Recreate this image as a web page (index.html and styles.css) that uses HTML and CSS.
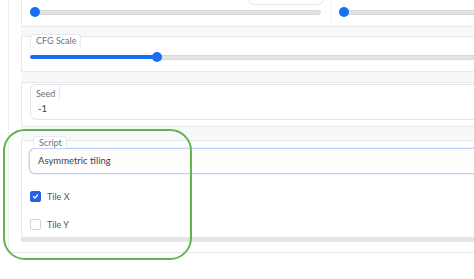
FILE: index.html
```html
<!DOCTYPE html>
<html>
<head>
<meta charset="utf-8">
<link rel="stylesheet" href="styles.css">
</head>
<body>
<div class="outer">
  <div class="col">
    <div class="panel top-panel">
      <div class="tcol tcol-left">
        <div class="numbox"></div>
        <div class="slider s-first">
          <div class="fill" style="width:5px"></div>
          <div class="thumb"></div>
          <div class="rest"></div>
        </div>
      </div>
      <div class="tcol tcol-right">
        <div class="slider s-second">
          <div class="fill" style="width:0px"></div>
          <div class="thumb"></div>
          <div class="rest rest-open"></div>
        </div>
      </div>
    </div>

    <div class="panel cfg-panel">
      <span class="chip chip-cfg">CFG Scale</span>
      <div class="slider s-cfg">
        <div class="fill" style="width:127px"></div>
        <div class="thumb"></div>
        <div class="rest rest-open"></div>
      </div>
    </div>

    <div class="panel seed-panel">
      <div class="seed-box">
        <span class="chip chip-seed">Seed</span>
        <div class="seed-value">-1</div>
      </div>
    </div>

    <div class="panel script-panel">
      <span class="chip chip-script">Script</span>
      <div class="dropdown">Asymmetric tiling</div>
      <label class="check-row row-x">
        <span class="box checked">
          <svg viewBox="0 0 12 12" width="11" height="11"><path d="M3.2 6.2 L5.1 8 L8.8 4" fill="none" stroke="#fff" stroke-width="1.6" stroke-linecap="round" stroke-linejoin="round"/></svg>
        </span>
        <span class="check-text">Tile X</span>
      </label>
      <label class="check-row row-y">
        <span class="box"></span>
        <span class="check-text">Tile Y</span>
      </label>
    </div>
  </div>
</div>
<div class="ring"></div>
</body>
</html>
```

FILE: styles.css
```css
html, body {
  margin: 0;
  padding: 0;
  background: #ffffff;
  overflow: hidden;
  width: 474px;
  height: 279px;
}

body {
  font-family: Lato, "Open Sans", "Liberation Sans", sans-serif;
  color: #374151;
  position: relative;
}

.outer {
  margin-left: 8px;
  margin-top: -20px;
  border-left: 1px solid #eceef1;
  border-bottom: 1px solid #e6e8eb;
  padding: 0 0 10px 12px;
}

.col {
  background: #f7f8fa;
  display: flex;
  flex-direction: column;
}

.panel {
  background: #ffffff;
  border: 1px solid #e7e9ec;
  border-right: none;
  display: flex;
  flex-direction: column;
  align-items: flex-start;
  font-size: 0;
}

/* top panel */
.top-panel {
  height: 46px;
  flex-direction: row;
  align-items: stretch;
  border-top: none;
}

.tcol-left {
  width: 294px;
  padding-left: 8px;
  display: flex;
  flex-direction: column;
}

.numbox {
  align-self: flex-end;
  width: 74px;
  height: 24px;
  border: 1px solid #e5e7eb;
  border-top: none;
  border-radius: 0 0 6px 6px;
  background: #fff;
}

.s-first {
  margin-top: 2px;
  margin-right: 3px;
}

.tcol-right {
  flex: 1;
  margin-left: 7px;
  border-left: 1px solid #f3f4f6;
  padding-left: 12px;
  padding-top: 27px;
}

/* slider */
.slider {
  display: flex;
  align-items: center;
  height: 10px;
  align-self: stretch;
}

.fill {
  height: 4px;
  background: #1570f5;
  border-radius: 2px 0 0 2px;
}

.thumb {
  width: 10px;
  height: 10px;
  border-radius: 50%;
  background: #1570f5;
  margin: 0 -5px;
  position: relative;
  z-index: 2;
  flex: none;
}

.rest {
  flex: 1;
  height: 3px;
  background: #e2e3e5;
  border: 1px solid #d6d8db;
  border-radius: 3px;
}

.rest-open {
  border-right: none;
  border-radius: 3px 0 0 3px;
}

/* chips */
.chip {
  display: block;
  font-size: 9px;
  line-height: 11px;
  color: #6b7280;
  background: #fff;
  border: 1px solid #e7e9ec;
  border-bottom: none;
  border-radius: 4px 4px 0 0;
  padding: 0 4px 0 5px;
  position: relative;
  z-index: 1;
}

/* cfg */
.cfg-panel {
  margin-top: 9px;
  height: 34px;
  padding-left: 8px;
}

.chip-cfg {
  margin-top: -3px;
  height: 12px;
  line-height: 12px;
}

.s-cfg {
  margin-top: 5px;
}

/* seed */
.seed-panel {
  margin-top: 10px;
  height: 43px;
  padding-left: 8px;
  align-items: stretch;
}

.seed-box {
  margin-top: 1px;
  height: 34px;
  border: 1px solid #e5e7eb;
  border-right: none;
  border-radius: 6px 0 0 6px;
  display: flex;
  flex-direction: column;
  align-items: flex-start;
}

.chip-seed {
  margin: 0;
  border-radius: 6px 0 0 0;
  padding: 3px 4px 1px 5px;
  border-top: none;
  border-left: none;
}

.seed-value {
  font-size: 9.5px;
  line-height: 12px;
  padding: 3px 0 0 7px;
  color: #374151;
}

/* script */
.script-panel {
  margin-top: 13px;
  height: 96px;
  padding-left: 7px;
  border-bottom: 5px solid #e4e5e7;
}

.chip-script {
  margin-top: -5px;
  margin-left: 4px;
  height: 11px;
}

.dropdown {
  align-self: stretch;
  height: 24px;
  border: 1px solid #bcd3f3;
  border-right: none;
  border-radius: 6px 0 0 6px;
  background: #fffefc;
  box-shadow: 0 0 0 1px #e9f0fb;
  font-size: 9.5px;
  line-height: 24px;
  padding-left: 8px;
  color: #374151;
}

.check-row {
  display: flex;
  align-items: center;
  gap: 6px;
  height: 11px;
  padding-left: 1px;
}

.row-x { margin-top: 17px; }
.row-y { margin-top: 17px; }

.box {
  width: 11px;
  height: 11px;
  box-sizing: border-box;
  border: 1px solid #d1d5db;
  border-radius: 2px;
  background: #fff;
  display: flex;
  align-items: center;
  justify-content: center;
}

.box.checked {
  background: #2760e4;
  border-color: #2760e4;
}

.box svg { display: block; }

.check-text {
  font-size: 9px;
  color: #4b5563;
  line-height: 11px;
}

/* highlight ring overlay */
.ring {
  position: absolute;
  left: 3px;
  top: 129px;
  width: 189px;
  height: 131px;
  box-sizing: border-box;
  border: 2.5px solid #63b450;
  border-radius: 22px;
}
```
